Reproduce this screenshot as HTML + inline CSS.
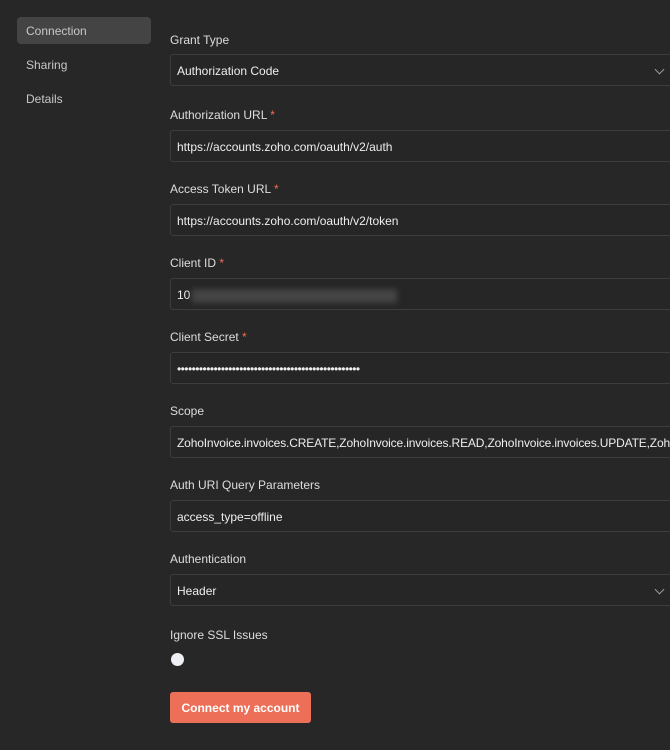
<!DOCTYPE html>
<html><head><style>
body{margin:0;width:670px;height:750px;background:#272727;font-family:"Liberation Sans",sans-serif;overflow:hidden;position:relative;color:#ddd}
.nav{position:absolute;left:17px;width:134px;height:27px;line-height:28px;padding-left:9px;box-sizing:border-box;font-size:12px;color:#c8c8c8;border-radius:4px}
.nav.a{background:#444;top:17px}
.lbl{position:absolute;left:170px;font-size:12px;color:#ddd;line-height:16px}
.lbl b{color:#ef6d56;font-weight:normal}
.inp{position:absolute;left:170px;width:520px;height:32px;box-sizing:border-box;border:1px solid #3d3d3d;border-radius:3px;background:#262626;font-size:12px;line-height:32px;padding-left:6px;color:#eee;white-space:nowrap;overflow:hidden}
.chev{position:absolute;left:656px;width:6px;height:6px;border-right:1px solid #999;border-bottom:1px solid #999;transform:rotate(45deg)}
</style></head><body>
<div class="nav a">Connection</div>
<div class="nav" style="top:51px">Sharing</div>
<div class="nav" style="top:85px">Details</div>

<div class="lbl" style="top:32px">Grant Type</div>
<div class="inp" style="top:54px">Authorization Code</div><div class="chev" style="top:66px"></div>
<div class="lbl" style="top:107px">Authorization URL <b>*</b></div>
<div class="inp" style="top:130px">https://accounts.zoho.com/oauth/v2/auth</div>
<div class="lbl" style="top:181px">Access Token URL <b>*</b></div>
<div class="inp" style="top:204px">https://accounts.zoho.com/oauth/v2/token</div>
<div class="lbl" style="top:255px">Client ID <b>*</b></div>
<div class="inp" style="top:278px">10<span style="display:inline-block;width:205px;height:14px;background:#444;filter:blur(3px);vertical-align:middle;margin-left:2px"></span></div>
<div class="lbl" style="top:329px">Client Secret <b>*</b></div>
<div class="inp" style="top:352px;letter-spacing:-0.55px">••••••••••••••••••••••••••••••••••••••••••••••••••</div>
<div class="lbl" style="top:403px">Scope</div>
<div class="inp" style="top:426px;letter-spacing:-0.15px">ZohoInvoice.invoices.CREATE,ZohoInvoice.invoices.READ,ZohoInvoice.invoices.UPDATE,ZohoInvo</div>
<div class="lbl" style="top:477px">Auth URI Query Parameters</div>
<div class="inp" style="top:500px">access_type=offline</div>
<div class="lbl" style="top:551px">Authentication</div>
<div class="inp" style="top:574px">Header</div><div class="chev" style="top:586px"></div>
<div class="lbl" style="top:627px">Ignore SSL Issues</div>
<div style="position:absolute;left:171px;top:653px;width:13px;height:13px;border-radius:50%;background:#eef0f6"></div>
<div style="position:absolute;left:170px;top:692px;width:141px;height:31px;background:#ee6f57;border-radius:3px;color:#fff;font-size:12px;font-weight:bold;text-align:center;line-height:32px">Connect my account</div>
</body></html>
